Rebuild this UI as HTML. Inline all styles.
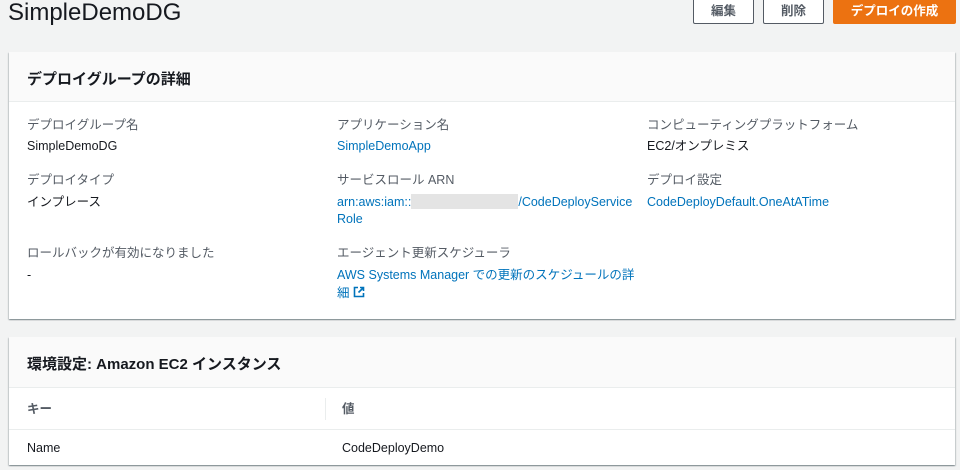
<!DOCTYPE html>
<html><head><meta charset="utf-8"><style>
*{box-sizing:border-box;margin:0;padding:0}
body{width:960px;height:470px;background:#f2f3f3;font-family:"Liberation Sans","Noto Sans CJK JP",sans-serif;color:#16191f;position:relative;overflow:hidden;font-size:12.5px}
.abs{position:absolute;white-space:nowrap;line-height:16px}
h1{position:absolute;left:8px;top:-2px;font-size:24px;font-weight:normal;color:#16191f;line-height:30px}
.btn{position:absolute;top:-2px;height:26px;border:1px solid #545b64;border-radius:2px;background:#fff;font-weight:bold;font-size:12.5px;color:#545b64;text-align:center;line-height:24px}
.panel{position:absolute;left:9px;width:946px;background:#fff;box-shadow:0 1px 1px rgba(0,28,36,.3),1px 1px 1px rgba(0,28,36,.15),-1px 1px 1px rgba(0,28,36,.15)}
.ph{height:50px;background:#fafafa;border-bottom:1px solid #eaeded;font-weight:bold;font-size:15px;line-height:20px;padding:18px 0 0 18px}
.lbl{color:#545b64}
.lnk{color:#0073bb}
</style></head><body>
<h1>SimpleDemoDG</h1>
<div class="btn" style="left:693px;width:61px">編集</div>
<div class="btn" style="left:763px;width:61px">削除</div>
<div class="btn" style="left:833px;width:123px;background:#ec7211;border-color:#ec7211;color:#fff">デプロイの作成</div>

<div class="panel" style="top:52px;height:267px">
<div class="ph">デプロイグループの詳細</div>
</div>
<div class="abs lbl" style="left:27px;top:117px">デプロイグループ名</div>
<div class="abs" style="left:27px;top:138px">SimpleDemoDG</div>
<div class="abs lbl" style="left:337px;top:117px">アプリケーション名</div>
<div class="abs lnk" style="left:337px;top:138px">SimpleDemoApp</div>
<div class="abs lbl" style="left:647px;top:117px">コンピューティングプラットフォーム</div>
<div class="abs" style="left:647px;top:138px">EC2/オンプレミス</div>

<div class="abs lbl" style="left:27px;top:172px">デプロイタイプ</div>
<div class="abs" style="left:27px;top:194px">インプレース</div>
<div class="abs lbl" style="left:337px;top:172px">サービスロール ARN</div>
<div class="abs lnk" style="left:337px;top:194px">arn:aws:iam::<span style="display:inline-block;width:107px;height:15px;background:#e4e4e4;vertical-align:-3px"></span>/CodeDeployService</div>
<div class="abs lnk" style="left:337px;top:211px">Role</div>
<div class="abs lbl" style="left:647px;top:172px">デプロイ設定</div>
<div class="abs lnk" style="left:647px;top:194px">CodeDeployDefault.OneAtATime</div>

<div class="abs lbl" style="left:27px;top:245px">ロールバックが有効になりました</div>
<div class="abs" style="left:27px;top:267px">-</div>
<div class="abs lbl" style="left:337px;top:245px">エージェント更新スケジューラ</div>
<div class="abs lnk" style="left:337px;top:267px">AWS Systems Manager での更新のスケジュールの詳</div>
<div class="abs lnk" style="left:337px;top:285px">細 <svg width="12" height="12" viewBox="0 0 12 12" style="vertical-align:-1px"><path d="M5 1.5H1.5v9h9V7M7 1.5h3.5V5M10.5 1.5L5.5 6.5" fill="none" stroke="#0073bb" stroke-width="1.6"/></svg></div>

<div class="panel" style="top:337px;height:128px">
<div class="ph" style="height:51px">環境設定: Amazon EC2 インスタンス</div>
<div style="height:42px;border-bottom:1px solid #eaeded;position:relative">
<div class="abs" style="left:18px;top:13px;font-weight:bold;color:#545b64">キー</div>
<div style="position:absolute;left:316px;top:10px;width:1px;height:22px;background:#eaeded"></div>
<div class="abs" style="left:333px;top:13px;font-weight:bold;color:#545b64">値</div>
</div>
<div class="abs" style="left:18px;top:103px">Name</div>
<div class="abs" style="left:333px;top:103px">CodeDeployDemo</div>
</div>
</body></html>
